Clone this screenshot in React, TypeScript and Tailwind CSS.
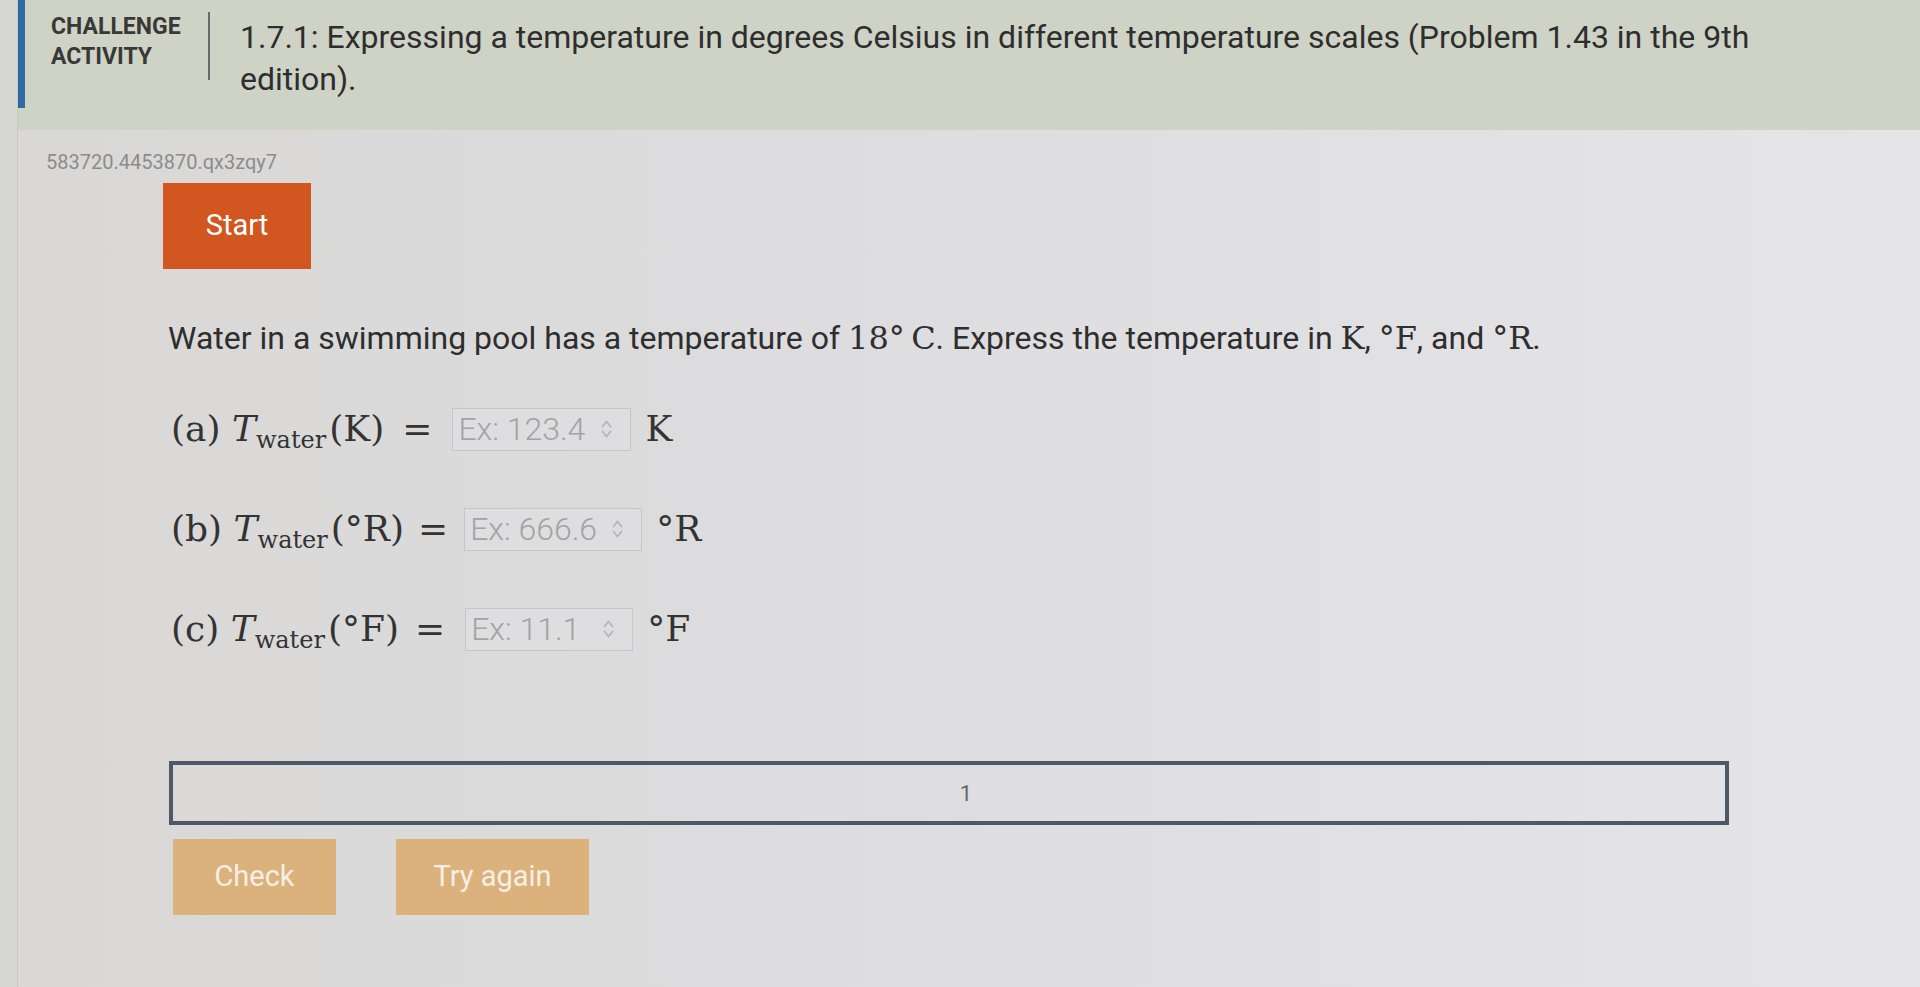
import React from "react";

function Spinner() {
  return (
    <svg width="13" height="24" viewBox="0 0 13 24" fill="none" stroke="#b5b5b5" strokeWidth="1.8" strokeLinecap="round" strokeLinejoin="round" className="shrink-0">
      <path d="M2.5 9.5 L6.5 4.5 L10.5 9.5" />
      <path d="M2.5 14.5 L6.5 19.5 L10.5 14.5" />
    </svg>
  );
}

function NumInput({ placeholder, width }: { placeholder: string; width: string }) {
  return (
    <div className={`flex h-[43px] items-center border border-[#c6c6c6] bg-[#dedde0] pl-[5px] pr-[17px] ${width}`}>
      <input
        type="text"
        disabled
        placeholder={placeholder}
        className="w-full min-w-0 bg-transparent font-['Roboto',sans-serif] text-[32px] font-light text-[#a3a3a3] outline-none placeholder:text-[#a3a3a3]"
      />
      <Spinner />
    </div>
  );
}

const serif = "font-['DejaVu_Serif','Liberation_Serif',serif]";

function MathLabel({ part, unit, eqClass }: { part: string; unit: React.ReactNode; eqClass: string }) {
  return (
    <span className={`ml-[3px] whitespace-nowrap ${serif} text-[36px] leading-none text-[#333]`}>
      ({part})&nbsp;<i>T</i>
      <span className="relative top-[7px] text-[24px]">water</span>
      <span className="ml-[3px]">({unit})</span>
      <span className={eqClass}>=</span>
    </span>
  );
}

export default function App() {
  return (
    <div className="flex min-h-screen w-full bg-[#d6d6d2] font-['Roboto',sans-serif] text-[#333]">
      <div className="w-[17px] shrink-0" />
      <div className="flex-1 border-l border-[#c9c9c4] bg-linear-to-r from-[#d9d8d6] via-[#dedde0] to-[#e5e4e7]">
        <header className="flex h-[130px] bg-[#cfd3c6]">
          <div className="h-[108px] w-[7px] shrink-0 bg-[#2f6aa5]" />
          <div className="ml-[26px] mt-[12px] flex w-[133px] shrink-0 flex-col text-[23px] font-bold leading-[30px] text-[#383838]">
            <span>CHALLENGE</span>
            <span>ACTIVITY</span>
          </div>
          <div className="ml-[24px] mt-[12px] h-[68px] w-[2px] shrink-0 bg-[#6a6a6a]" />
          <h1 className="ml-[30px] mt-[16px] w-[1560px] text-[32px] font-normal leading-[42px] text-[#2e2e2e]">
            1.7.1: Expressing a temperature in degrees Celsius in different temperature scales (Problem 1.43 in the 9th edition).
          </h1>
        </header>

        <div className="ml-[28px] mt-[22px] text-[20px] leading-[20px] text-[#8c8c8c]">583720.4453870.qx3zqy7</div>

        <div className="ml-[150px] flex flex-col items-start">
          <button className="-ml-[5px] mt-[11px] flex h-[86px] w-[148px] items-center justify-center bg-[#d2561f] text-[29px] text-white">
            Start
          </button>

          <p className="mt-[49px] flex items-baseline whitespace-nowrap text-[32px] leading-[40px] text-[#2e2e2e]">
            Water in a swimming pool has a temperature of&nbsp;
            <span className={`${serif} text-[32px]`}>18°&thinsp;C</span>. Express the temperature in&nbsp;
            <span className={`${serif} text-[32px]`}>K</span>,&nbsp;
            <span className={`${serif} text-[32px]`}>°F</span>, and&nbsp;
            <span className={`${serif} text-[32px]`}>°R</span>.
          </p>

          <div className="mt-[46px] flex h-[50px] items-center">
            <MathLabel part="a" unit="K" eqClass="ml-[18px] mr-[20px]" />
            <NumInput placeholder="Ex: 123.4" width="w-[179px]" />
            <span className={`ml-[14px] ${serif} text-[36px] text-[#333]`}>K</span>
          </div>

          <div className="mt-[50px] flex h-[50px] items-center">
            <MathLabel part="b" unit="°R" eqClass="ml-[14px] mr-[16px]" />
            <NumInput placeholder="Ex: 666.6" width="w-[178px]" />
            <span className={`ml-[14px] ${serif} text-[36px] text-[#333]`}>°R</span>
          </div>

          <div className="mt-[50px] flex h-[50px] items-center">
            <MathLabel part="c" unit="°F" eqClass="ml-[16px] mr-[20px]" />
            <NumInput placeholder="Ex: 11.1" width="w-[168px]" />
            <span className={`ml-[14px] ${serif} text-[36px] text-[#333]`}>°F</span>
          </div>

          <div className="ml-[1px] mt-[107px] flex h-[64px] w-[1560px] items-center justify-center border-4 border-[#4f5868] pl-[34px] text-[22px] text-[#666]">
            1
          </div>

          <div className="ml-[5px] mt-[14px] flex gap-[60px]">
            <button className="flex h-[76px] w-[163px] items-center justify-center bg-[#dcb27c] text-[29px] text-[#f6efe4]">
              Check
            </button>
            <button className="flex h-[76px] w-[193px] items-center justify-center bg-[#dcb27c] text-[29px] text-[#f6efe4]">
              Try again
            </button>
          </div>
        </div>
      </div>
    </div>
  );
}
